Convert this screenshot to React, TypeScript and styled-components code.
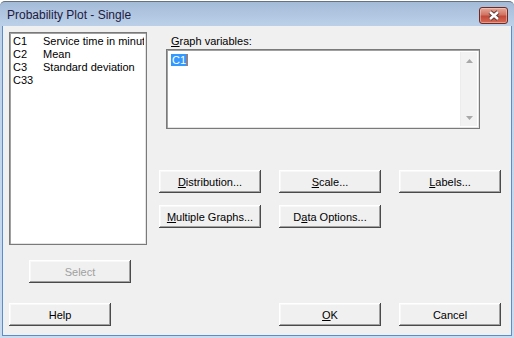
import styled, { createGlobalStyle } from "styled-components";

const GlobalStyle = createGlobalStyle`
  html, body {
    margin: 0;
    padding: 0;
    background: #ffffff;
  }
  body {
    font-family: "Liberation Sans", Arial, sans-serif;
    font-size: 11px;
  }
`;

const Window = styled.div`
  width: 514px;
  height: 337px;
  margin-top: 1px;
  box-sizing: border-box;
  display: flex;
  flex-direction: column;
  background: linear-gradient(#a4bbd8, #bed2ea 26px, #c9dcf0);
  border-radius: 5px 5px 0 0;
  border-top: 1px solid #66707e;
  padding: 0 2px 2px 2px;
`;

const TitleBar = styled.div`
  height: 24px;
  display: flex;
  align-items: flex-start;
  justify-content: space-between;
  padding: 3px 4px 0 5px;
  box-sizing: border-box;
`;

const Title = styled.span`
  font-family: "Liberation Sans", Arial, sans-serif;
  font-size: 12px;
  line-height: 20px;
  color: #1e1a40;
`;

const CloseButton = styled.div`
  width: 29px;
  height: 17px;
  margin-top: 2px;
  box-sizing: border-box;
  border: 1px solid #6b2c26;
  border-radius: 3px;
  background: linear-gradient(#e7a898, #d27463 45%, #c24a3a 55%, #d66a55);
  box-shadow: inset 0 0 0 1px rgba(255, 220, 210, 0.45);
  display: flex;
  align-items: center;
  justify-content: center;
`;

const Client = styled.div`
  flex: 1;
  background: #f0f0f0;
  border: 1px solid #5b8ccc;
  border-top: none;
  padding: 6px 0 0 6px;
  display: flex;
  flex-direction: column;
`;

const Body = styled.div`
  display: flex;
  gap: 12px;
`;

const LeftColumn = styled.div`
  display: flex;
  flex-direction: column;
  align-items: flex-start;
`;

const RightColumn = styled.div`
  display: flex;
  flex-direction: column;
  align-items: flex-start;
`;

const Sunken = styled.div`
  box-sizing: border-box;
  background: #ffffff;
  border: 1px solid #7a7a7a;
  box-shadow: inset 1px 1px #a0a0a0, inset -1px -1px #e3e3e3;
`;

const ListBox = styled(Sunken)`
  width: 138px;
  height: 213px;
  padding: 2px 2px 0 3px;
  overflow: hidden;
`;

const ListRow = styled.div`
  display: grid;
  grid-template-columns: 30px 1fr;
  height: 13px;
  line-height: 13px;
  white-space: nowrap;
  overflow: hidden;
  color: #000;
`;

const FieldLabel = styled.div`
  margin: 3px 0 0 12px;
  line-height: 13px;
  color: #000;
`;

const VarsBox = styled(Sunken)`
  width: 314px;
  height: 80px;
  margin: 1px 0 0 7px;
  display: flex;
  padding: 2px 2px 2px 0;
`;

const VarsText = styled.div`
  flex: 1;
  padding: 2px 0 0 4px;
  line-height: 13px;
`;

const Selected = styled.span`
  background: #3399ff;
  color: #ffffff;
  padding: 0 1px;
  border-right: 1px solid #e07020;
`;

const ScrollBar = styled.div`
  width: 17px;
  background: #f2f2f2;
  border-left: 1px solid #ececec;
  display: flex;
  flex-direction: column;
  justify-content: space-between;
  align-items: center;
  padding: 7px 0 6px;
  box-sizing: border-box;
`;

const ButtonGrid = styled.div`
  display: grid;
  grid-template-columns: repeat(3, 102px);
  column-gap: 18px;
  row-gap: 12px;
  margin-top: 41px;
`;

const Button = styled.button<{ $inactive?: boolean }>`
  width: 102px;
  height: 23px;
  box-sizing: border-box;
  padding: 0;
  border: none;
  background: #f0f0f0;
  box-shadow: inset -1px -1px #4a4a4a, inset 1px 1px #ffffff,
    inset -2px -2px #a0a0a0, inset 2px 2px #f8f8f8;
  font-family: "Liberation Sans", Arial, sans-serif;
  font-size: 11px;
  color: ${(p) => (p.$inactive ? "#a0a0a0" : "#000000")};
`;

const SelectButton = styled(Button)`
  margin: 15px 0 0 20px;
`;

const BottomRow = styled.div`
  display: grid;
  grid-template-columns: 102px 1fr 102px 102px;
  column-gap: 18px;
  width: 492px;
  margin-top: 20px;
`;

const columns = [
  { id: "C1", name: "Service time in minutes" },
  { id: "C2", name: "Mean" },
  { id: "C3", name: "Standard deviation" },
  { id: "C33", name: "" },
];

function Arrow({ up }: { up?: boolean }) {
  return (
    <svg width="7" height="4" viewBox="0 0 7 4">
      <path d={up ? "M0 4 L3.5 0 L7 4 Z" : "M0 0 L7 0 L3.5 4 Z"} fill="#a8a8a8" />
    </svg>
  );
}

export default function App() {
  return (
    <>
      <GlobalStyle />
      <Window>
        <TitleBar>
          <Title>Probability Plot - Single</Title>
          <CloseButton>
            <svg width="16" height="11" viewBox="0 0 16 11">
              <path d="M4 2 L12 9 M12 2 L4 9" stroke="#5e3b37" strokeWidth="4.4" />
              <path d="M4 2 L12 9 M12 2 L4 9" stroke="#ffffff" strokeWidth="2.4" />
            </svg>
          </CloseButton>
        </TitleBar>
        <Client>
          <Body>
            <LeftColumn>
              <ListBox>
                {columns.map((c) => (
                  <ListRow key={c.id}>
                    <span>{c.id}</span>
                    <span>{c.name}</span>
                  </ListRow>
                ))}
              </ListBox>
              <SelectButton $inactive>Select</SelectButton>
            </LeftColumn>
            <RightColumn>
              <FieldLabel>
                <u>G</u>raph variables:
              </FieldLabel>
              <VarsBox>
                <VarsText>
                  <Selected>C1</Selected>
                </VarsText>
                <ScrollBar>
                  <Arrow up />
                  <Arrow />
                </ScrollBar>
              </VarsBox>
              <ButtonGrid>
                <Button>
                  <u>D</u>istribution...
                </Button>
                <Button>
                  <u>S</u>cale...
                </Button>
                <Button>
                  <u>L</u>abels...
                </Button>
                <Button>
                  <u>M</u>ultiple Graphs...
                </Button>
                <Button>
                  D<u>a</u>ta Options...
                </Button>
              </ButtonGrid>
            </RightColumn>
          </Body>
          <BottomRow>
            <Button>Help</Button>
            <span />
            <Button>
              <u>O</u>K
            </Button>
            <Button>Cancel</Button>
          </BottomRow>
        </Client>
      </Window>
    </>
  );
}
